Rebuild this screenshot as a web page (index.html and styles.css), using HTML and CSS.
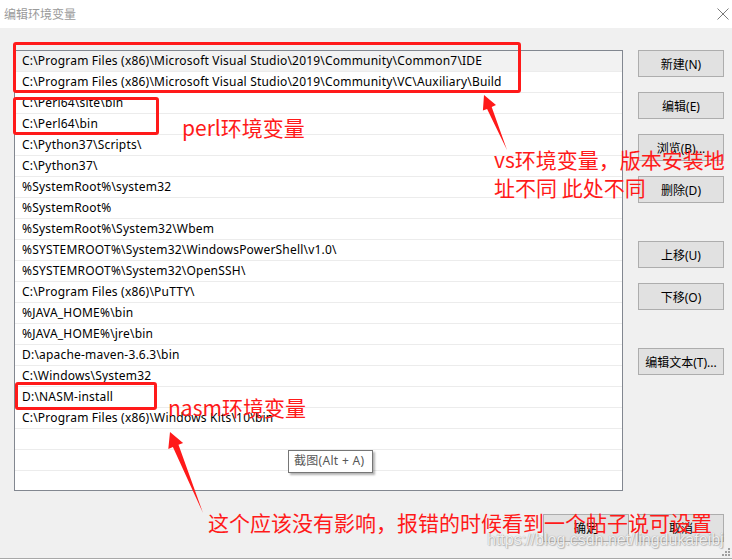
FILE: index.html
```html
<!DOCTYPE html>
<html lang="zh-CN">
<head>
<meta charset="utf-8">
<title>编辑环境变量</title>
<link rel="stylesheet" href="styles.css">
</head>
<body>
<div class="window">
  <div class="titlebar">
    <span class="title">编辑环境变量</span>
    <svg class="close" width="12" height="12" viewBox="0 0 12 12"><path d="M0.5 0.5 L11.5 11.5 M11.5 0.5 L0.5 11.5" stroke="#7a7a7a" stroke-width="1" fill="none"/></svg>
  </div>
  <div class="content">
    <div class="main">
      <div class="list">
        <div class="row hover">C:\Program Files (x86)\Microsoft Visual Studio\2019\Community\Common7\IDE</div>
        <div class="row">C:\Program Files (x86)\Microsoft Visual Studio\2019\Community\VC\Auxiliary\Build</div>
        <div class="row">C:\Perl64\site\bin</div>
        <div class="row">C:\Perl64\bin</div>
        <div class="row">C:\Python37\Scripts\</div>
        <div class="row">C:\Python37\</div>
        <div class="row">%SystemRoot%\system32</div>
        <div class="row">%SystemRoot%</div>
        <div class="row">%SystemRoot%\System32\Wbem</div>
        <div class="row">%SYSTEMROOT%\System32\WindowsPowerShell\v1.0\</div>
        <div class="row">%SYSTEMROOT%\System32\OpenSSH\</div>
        <div class="row">C:\Program Files (x86)\PuTTY\</div>
        <div class="row">%JAVA_HOME%\bin</div>
        <div class="row">%JAVA_HOME%\jre\bin</div>
        <div class="row">D:\apache-maven-3.6.3\bin</div>
        <div class="row">C:\Windows\System32</div>
        <div class="row">D:\NASM-install</div>
        <div class="row">C:\Program Files (x86)\Windows Kits\10\bin</div>
        <div class="row"></div>
        <div class="row"></div>
      </div>
      <div class="buttons">
        <button class="btn">新建(N)</button>
        <button class="btn">编辑(E)</button>
        <button class="btn">浏览(B)...</button>
        <button class="btn">删除(D)</button>
        <button class="btn group">上移(U)</button>
        <button class="btn">下移(O)</button>
        <button class="btn group">编辑文本(T)...</button>
      </div>
    </div>
    <div class="footer">
      <button class="btn">确定</button>
      <button class="btn">取消</button>
    </div>
  </div>

  <div class="redbox box-vs"></div>
  <div class="redbox box-perl"></div>
  <div class="redbox box-nasm"></div>

  <svg class="arrows" width="732" height="560" viewBox="0 0 732 560">
    <polygon fill="#ff1a1a" points="484,95 496,105 491.7,107 507,150 487.1,109 482.9,110.6"/>
    <polygon fill="#ff1a1a" points="170,432 183.1,442.9 178.5,444.8 203,513 172.9,447 168.3,448.9"/>
  </svg>

  <div class="note note-perl">perl环境变量</div>
  <div class="note note-vs">vs环境变量，版本安装地<br>址不同 此处不同</div>
  <div class="note note-nasm">nasm环境变量</div>

  <div class="tooltip">截图(Alt + A)</div>

  <div class="note note-bottom">这个应该没有影响，报错的时候看到一个帖子说可设置</div>
  <div class="watermark">https://blog.csdn.net/lingdukafeibj</div>

  <svg class="grip" width="8" height="8" viewBox="0 0 8 8">
    <rect x="6" y="0" width="2" height="2" fill="#a0a0a0"/>
    <rect x="3" y="3" width="2" height="2" fill="#a0a0a0"/>
    <rect x="6" y="3" width="2" height="2" fill="#a0a0a0"/>
    <rect x="0" y="6" width="2" height="2" fill="#a0a0a0"/>
    <rect x="3" y="6" width="2" height="2" fill="#a0a0a0"/>
    <rect x="6" y="6" width="2" height="2" fill="#a0a0a0"/>
  </svg>
</div>
</body>
</html>
```

FILE: styles.css
```css
* { box-sizing: border-box; }
html, body {
  margin: 0;
  padding: 0;
  background: #ffffff;
}
body {
  font-family: "Noto Sans", "Noto Sans CJK SC", sans-serif;
  font-size: 12px;
  color: #000;
}
.window {
  position: relative;
  width: 732px;
  height: 560px;
  overflow: hidden;
}
.titlebar {
  height: 28px;
  background: #ffffff;
  display: flex;
  align-items: center;
  justify-content: space-between;
  padding: 0 3px 2px 4px;
}
.title {
  color: #9a9a9a;
  font-family: "Noto Sans CJK SC", sans-serif;
  font-size: 12px;
}
.close { display: block; margin-top: 2px; }
.content {
  background: #f0f0f0;
  height: 531px;
  padding: 22px 8px 0 14px;
  border-bottom: 1px solid #a8a8a8;
}
.main {
  display: flex;
  gap: 15px;
}
.list {
  width: 609px;
  height: 441px;
  border: 1px solid #828790;
  background: #ffffff;
  display: flex;
  flex-direction: column;
}
.row {
  height: 21px;
  line-height: 19px;
  padding-left: 7px;
  border-bottom: 1px solid #ececec;
  white-space: nowrap;
  letter-spacing: 0.2px;
  flex: none;
}
.row.hover { background: #f2f2f2; }
.buttons {
  display: flex;
  flex-direction: column;
  gap: 15px;
}
.btn {
  width: 86px;
  height: 27px;
  border: 1px solid #adadad;
  background: #e1e1e1;
  font-family: "Noto Sans", "Noto Sans CJK SC", sans-serif;
  font-size: 12px;
  color: #000;
  padding: 0;
  margin: 0;
}
.btn.group { margin-top: 23px; }
.footer {
  display: flex;
  justify-content: flex-end;
  gap: 9px;
  margin-top: 23px;
}
.footer .btn { height: 28px; }

/* annotations */
.redbox {
  position: absolute;
  border: 3px solid #ff1a1a;
  border-radius: 3px;
}
.box-vs { left: 13px; top: 42px; width: 508px; height: 51px; }
.box-perl { left: 13px; top: 97px; width: 146px; height: 38px; }
.box-nasm { left: 15px; top: 382px; width: 142px; height: 28px; }
.arrows { position: absolute; left: 0; top: 0; }
.note {
  position: absolute;
  color: #ff1a1a;
  font-family: "Noto Sans CJK SC", sans-serif;
  font-size: 21px;
  line-height: 21px;
  white-space: nowrap;
}
.note-perl { left: 182px; top: 117px; }
.note-vs { left: 494px; line-height: 28px; top: 145px; }
.note-nasm { left: 168px; top: 397px; }
.note-bottom { left: 208px; top: 512px; }
.tooltip {
  position: absolute;
  left: 288px;
  top: 450px;
  width: 85px;
  height: 23px;
  background: #ffffff;
  border: 1px solid #767676;
  color: #575757;
  font-family: "Noto Sans", "Noto Sans CJK SC", sans-serif;
  font-size: 12px;
  line-height: 20px;
  padding-left: 5px;
  letter-spacing: 0.3px;
  box-shadow: 2px 2px 2px rgba(0,0,0,0.3);
  white-space: nowrap;
}
.watermark {
  position: absolute;
  left: 487px;
  top: 531px;
  font-family: "Liberation Sans", sans-serif;
  font-size: 16px;
  color: rgba(255,255,255,0.85);
  text-shadow: 0 0 1px rgba(110,110,110,0.7), 1px 1px 1px rgba(140,140,140,0.5);
  white-space: nowrap;
}
.grip { position: absolute; right: 2px; bottom: 4px; }
```
